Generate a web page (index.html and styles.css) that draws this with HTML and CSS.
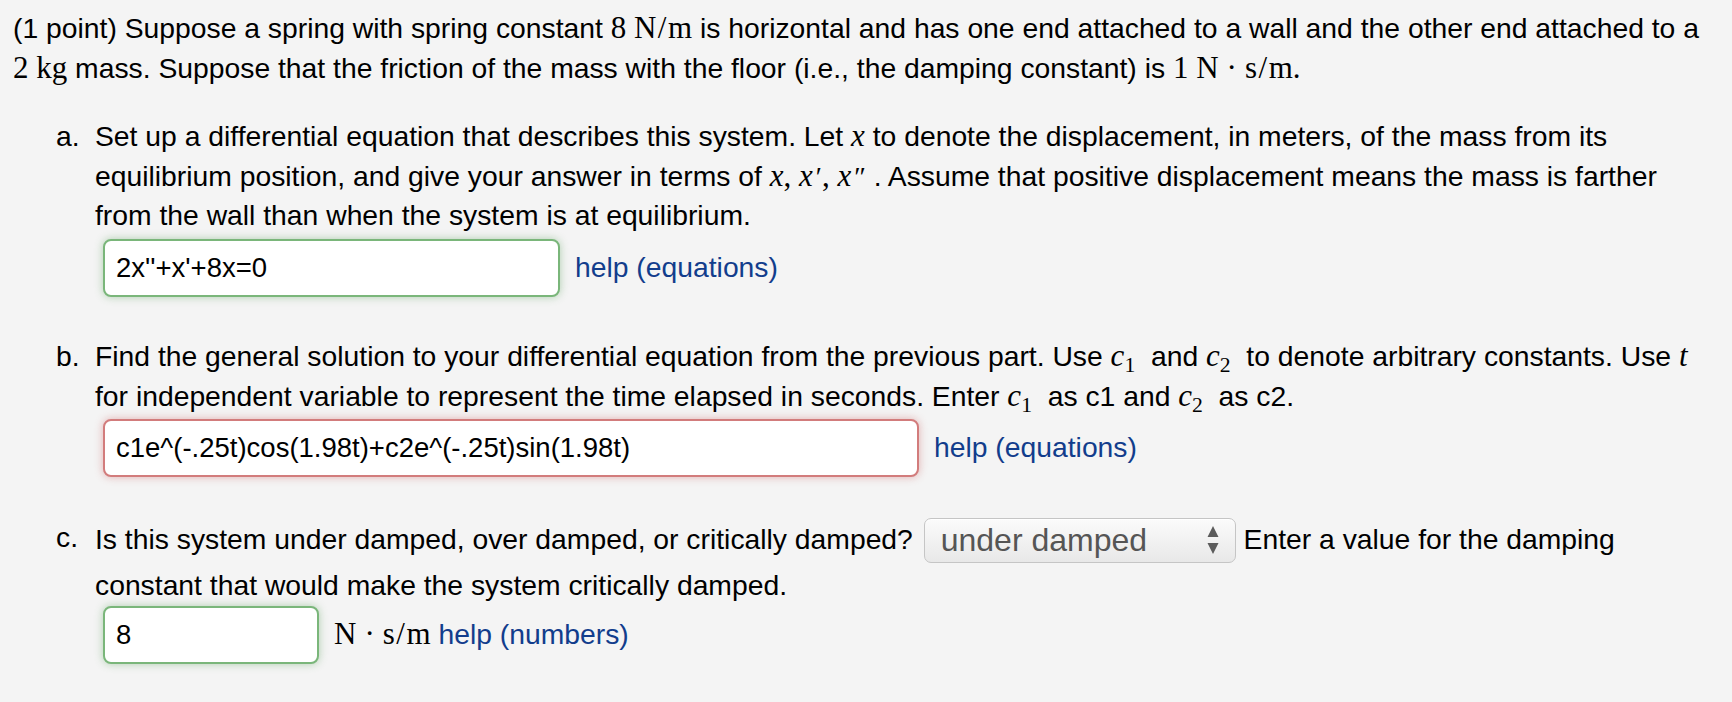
FILE: index.html
```html
<!DOCTYPE html>
<html lang="en">
<head>
<meta charset="utf-8">
<title>Spring problem</title>
<link rel="stylesheet" href="styles.css">
</head>
<body>
<div class="problem">
  <p class="intro">(1 point) Suppose a spring with spring constant <span class="m">8 N<span class="sl">/</span>m</span> is horizontal and has one end attached to a wall and the other end attached to a<br><span class="m">2 kg</span> mass. Suppose that the friction of the mass with the floor (i.e., the damping constant) is <span class="m">1 N<span class="dot">·</span>s<span class="sl">/</span>m.</span></p>
  <ol class="parts">
    <li class="part">
      <span class="label">a.</span>
      <div class="body">
        <div class="text">Set up a differential equation that describes this system. Let <span class="m"><i>x</i></span> to denote the displacement, in meters, of the mass from its<br>equilibrium position, and give your answer in terms of <span class="m"><i>x</i>, <i>x</i><span class="pr">′</span>, <i>x</i><span class="pr">″</span></span> . Assume that positive displacement means the mass is farther<br>from the wall than when the system is at equilibrium.</div>
        <div class="answer">
          <input class="ans ok wa" type="text" value="2x''+x'+8x=0" readonly>
          <a class="help" href="#">help (equations)</a>
        </div>
      </div>
    </li>
    <li class="part">
      <span class="label">b.</span>
      <div class="body">
        <div class="text">Find the general solution to your differential equation from the previous part. Use <span class="m"><i>c</i><sub>1</sub></span>&nbsp; and <span class="m"><i>c</i><sub>2</sub></span>&nbsp; to denote arbitrary constants. Use <span class="m"><i>t</i></span><br>for independent variable to represent the time elapsed in seconds. Enter <span class="m"><i>c</i><sub>1</sub></span>&nbsp; as c1 and <span class="m"><i>c</i><sub>2</sub></span>&nbsp; as c2.</div>
        <div class="answer">
          <input class="ans bad wb" type="text" value="c1e^(-.25t)cos(1.98t)+c2e^(-.25t)sin(1.98t)" readonly>
          <a class="help" href="#">help (equations)</a>
        </div>
      </div>
    </li>
    <li class="part">
      <span class="label">c.</span>
      <div class="body">
        <div class="text">Is this system under damped, over damped, or critically damped? <span class="select"><span class="sel-text">under damped</span><svg class="sel-arrows" width="12" height="28" viewBox="0 0 12 28"><path d="M6 0 L11.5 11 H0.5 Z M6 28 L11.5 17 H0.5 Z" fill="#5c5c5c"/></svg></span> Enter a value for the damping<br>constant that would make the system critically damped.</div>
        <div class="answer ans-c">
          <input class="ans ok wc" type="text" value="8" readonly>
          <span class="unit"><span class="m">N<span class="dot">·</span>s<span class="sl">/</span>m</span> <a class="help" href="#">help (numbers)</a></span>
        </div>
      </div>
    </li>
  </ol>
</div>
</body>
</html>
```

FILE: styles.css
```css
html, body {
  background: #f4f4f4;
}

body {
  margin: 0;
  color: #000;
  font-family: "Liberation Sans", Arial, Helvetica, sans-serif;
  font-size: 28.3px;
  line-height: 39.5px;
}

.problem {
  padding: 9px 13px 0;
}

.intro {
  margin: 0;
  white-space: nowrap;
}

.m {
  font-family: "Liberation Serif", "Times New Roman", serif;
  font-size: 31px;
  line-height: 1;
}

.m i {
  font-style: italic;
}

.sl {
  padding: 0 1.5px;
}

.dot {
  padding: 0 8px;
}

.pr {
  padding-left: 3px;
  font-size: 0.9em;
}

sub {
  font-size: 0.7em;
  line-height: 0;
  vertical-align: -0.28em;
  font-style: normal;
}

.parts {
  list-style: none;
  margin: 29px 0 0;
  padding: 0 0 0 43px;
}

.part {
  display: grid;
  grid-template-columns: 39px auto;
  margin-bottom: 40.5px;
}

.text {
  white-space: nowrap;
}

.answer {
  display: flex;
  align-items: center;
  gap: 15px;
  margin: 3px 0 0 8px;
}

.ans-c {
  margin-top: 1px;
}

.ans {
  box-sizing: border-box;
  height: 58px;
  margin: 0;
  padding: 0 11px;
  border: 2px solid #7ab67a;
  border-radius: 8px;
  background: #fff;
  color: #000;
  font-family: "Liberation Sans", Arial, sans-serif;
  font-size: 27.5px;
  box-shadow: 0 0 8px rgba(92, 160, 92, 0.45);
  outline: none;
}

.ans.bad {
  border-color: #d27c7c;
  box-shadow: 0 0 8px rgba(205, 95, 95, 0.45);
}

.wa { width: 457px; }
.wb { width: 816px; }
.wc { width: 216px; }

.help {
  color: #123d8c;
  text-decoration: none;
}

.select {
  display: inline-flex;
  align-items: center;
  justify-content: space-between;
  box-sizing: border-box;
  width: 312px;
  height: 45px;
  margin: 0 0 3px 3px;
  padding: 0 16px 0 16px;
  vertical-align: middle;
  border: 1px solid #c5c5c5;
  border-radius: 7px;
  background: linear-gradient(#fbfbfb, #e8e8e8);
  box-shadow: inset 0 1px 0 #fff;
  line-height: 1;
}

.sel-text {
  color: #555;
  font-size: 32px;
}

.sel-arrows {
  display: block;
}
```
